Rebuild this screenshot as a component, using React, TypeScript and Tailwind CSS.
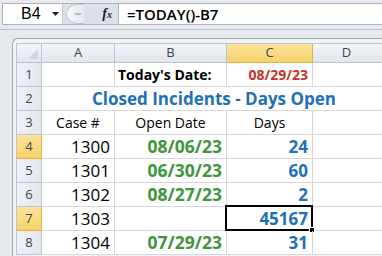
import React from "react";

const rows = [
  { n: "4", a: "1300", b: "08/06/23", c: "24", sel: true },
  { n: "5", a: "1301", b: "06/30/23", c: "60" },
  { n: "6", a: "1302", b: "08/27/23", c: "2" },
  { n: "7", a: "1303", b: "", c: "45167", sel: true, box: true },
  { n: "8", a: "1304", b: "07/29/23", c: "31" },
];

const cell = "border-r border-b border-[#d5d9de] h-[24px] flex items-center";
const rowHead =
  "border-r border-b border-[#bcc5d0] h-[24px] flex items-center justify-center text-[13px] text-[#3c4654] font-['Open_Sans',sans-serif]";

export default function App() {
  return (
    <div className="w-[382px] h-[256px] overflow-hidden bg-[#e6e9ed] font-['Open_Sans',sans-serif]">
      {/* formula bar */}
      <div className="pt-[3px] h-[30px] border-b border-[#b7bec7]">
        <div className="h-[22px] flex border-y border-[#a9b2bd] ml-[2px]">
          <div className="w-[60px] bg-white border-l border-[#a9b2bd] flex items-center">
            <span className="ml-[18px] text-[16px] text-black font-['Liberation_Sans',sans-serif]">B4</span>
            <svg className="ml-auto mr-[3px]" width="7" height="4" viewBox="0 0 7 4">
              <path d="M0 0 H7 L3.5 4 Z" fill="#222" />
            </svg>
          </div>
          <div className="w-[56px] bg-[#dce1e7] border-l border-[#c4cbd3] flex items-center">
            <div className="w-[18px] h-[20px] ml-[3px] rounded-l-full bg-gradient-to-r from-[#f6f7f9] to-[#e4e8ec] border border-r-0 border-[#c1c7cf] flex items-center justify-center">
              <div className="w-[6px] h-[2px] bg-[#b9bec5] ml-[4px]" />
            </div>
            <span className="ml-auto mr-[6px] italic text-[14px] text-[#222] font-['Liberation_Serif',serif] font-bold leading-none">
              f<span className="text-[10px]">x</span>
            </span>
          </div>
          <div className="flex-1 bg-white border-l border-[#a9b2bd] flex items-center pl-[8px]">
            <span className="text-[15px] font-semibold text-black font-['Open_Sans',sans-serif]">=TODAY()-B7</span>
          </div>
        </div>
      </div>

      {/* sheet frame */}
      <div className="mt-[8px] ml-[12px] border-l border-t border-[#a3abb5] rounded-tl-[6px] pl-[3px] pt-[4px] bg-[#f1f3f6] h-[300px]">
        <div className="grid grid-cols-[25px_73px_112px_86px_1fr] border-l border-t border-[#bcc5d0] bg-white">
          {/* header row */}
          <div className="h-[19px] border-r border-b border-[#bcc5d0] bg-gradient-to-b from-[#f3f5f8] to-[#e1e6ec] relative">
            <svg className="absolute right-[3px] bottom-[3px]" width="10" height="10" viewBox="0 0 10 10">
              <path d="M10 0 V10 H0 Z" fill="#d2d7dd" />
            </svg>
          </div>
          {["A", "B"].map((l) => (
            <div
              key={l}
              className="h-[19px] border-r border-b border-[#bcc5d0] bg-gradient-to-b from-[#f3f5f8] to-[#e1e6ec] flex items-center justify-center text-[13px] text-[#3c4654]"
            >
              {l}
            </div>
          ))}
          <div className="h-[19px] border-r border-b border-[#e2b443] bg-gradient-to-b from-[#fbe39a] to-[#f7d36a] flex items-center justify-center text-[13px] text-[#3c4654]">
            C
          </div>
          <div className="h-[19px] border-b border-[#bcc5d0] bg-gradient-to-b from-[#f3f5f8] to-[#e1e6ec] flex items-center justify-center text-[13px] text-[#3c4654] pr-[2px]">
            D
          </div>

          {/* row 1 */}
          <div className={`${rowHead} bg-gradient-to-r from-[#eef1f5] to-[#e3e7ec]`}>1</div>
          <div className={cell} />
          <div className={`${cell} pl-[3px] text-[14px] font-bold text-black`}>Today's Date:</div>
          <div className={`${cell} justify-end pr-[4px] text-[14px] font-bold text-[#c3342a]`}>08/29/23</div>
          <div className="border-b border-[#d5d9de] h-[24px]" />

          {/* row 2 */}
          <div className={`${rowHead} bg-gradient-to-r from-[#eef1f5] to-[#e3e7ec]`}>2</div>
          <div className="col-span-4 border-b border-[#d5d9de] h-[24px] flex items-center overflow-visible">
            <div className="w-[344px] shrink-0 text-center whitespace-nowrap text-[17px] font-bold text-[#1f70b6]">
              Closed Incidents - Days Open
            </div>
          </div>

          {/* row 3 */}
          <div className={`${rowHead} bg-gradient-to-r from-[#eef1f5] to-[#e3e7ec]`}>3</div>
          <div className={`${cell} justify-center text-[14px] text-black`}>Case #</div>
          <div className={`${cell} justify-center text-[14px] text-black`}>Open Date</div>
          <div className={`${cell} justify-center text-[14px] text-black`}>Days</div>
          <div className="border-b border-[#d5d9de] h-[24px]" />

          {rows.map((r) => (
            <React.Fragment key={r.n}>
              <div
                className={`${rowHead} ${
                  r.sel
                    ? "bg-gradient-to-b from-[#fbe39a] to-[#f7d36a] border-[#e2b443]"
                    : "bg-gradient-to-r from-[#eef1f5] to-[#e3e7ec]"
                }`}
              >
                {r.n}
              </div>
              <div className={`${cell} justify-end pr-[4px] text-[17px] text-black`}>{r.a}</div>
              <div className={`${cell} justify-end pr-[4px] text-[17.5px] font-bold text-[#3e963c]`}>{r.b}</div>
              <div className={`${cell} justify-end pr-[4px] text-[17px] font-bold text-[#1f70b6] relative`}>
                {r.c}
                {r.box && (
                  <div className="absolute -left-[2px] -top-[2px] -right-[1px] -bottom-[1px] border-2 border-black">
                    <div className="absolute -right-[4px] -bottom-[4px] w-[6px] h-[6px] bg-black border border-white" />
                  </div>
                )}
              </div>
              <div className="border-b border-[#d5d9de] h-[24px]" />
            </React.Fragment>
          ))}
        </div>
      </div>
    </div>
  );
}
